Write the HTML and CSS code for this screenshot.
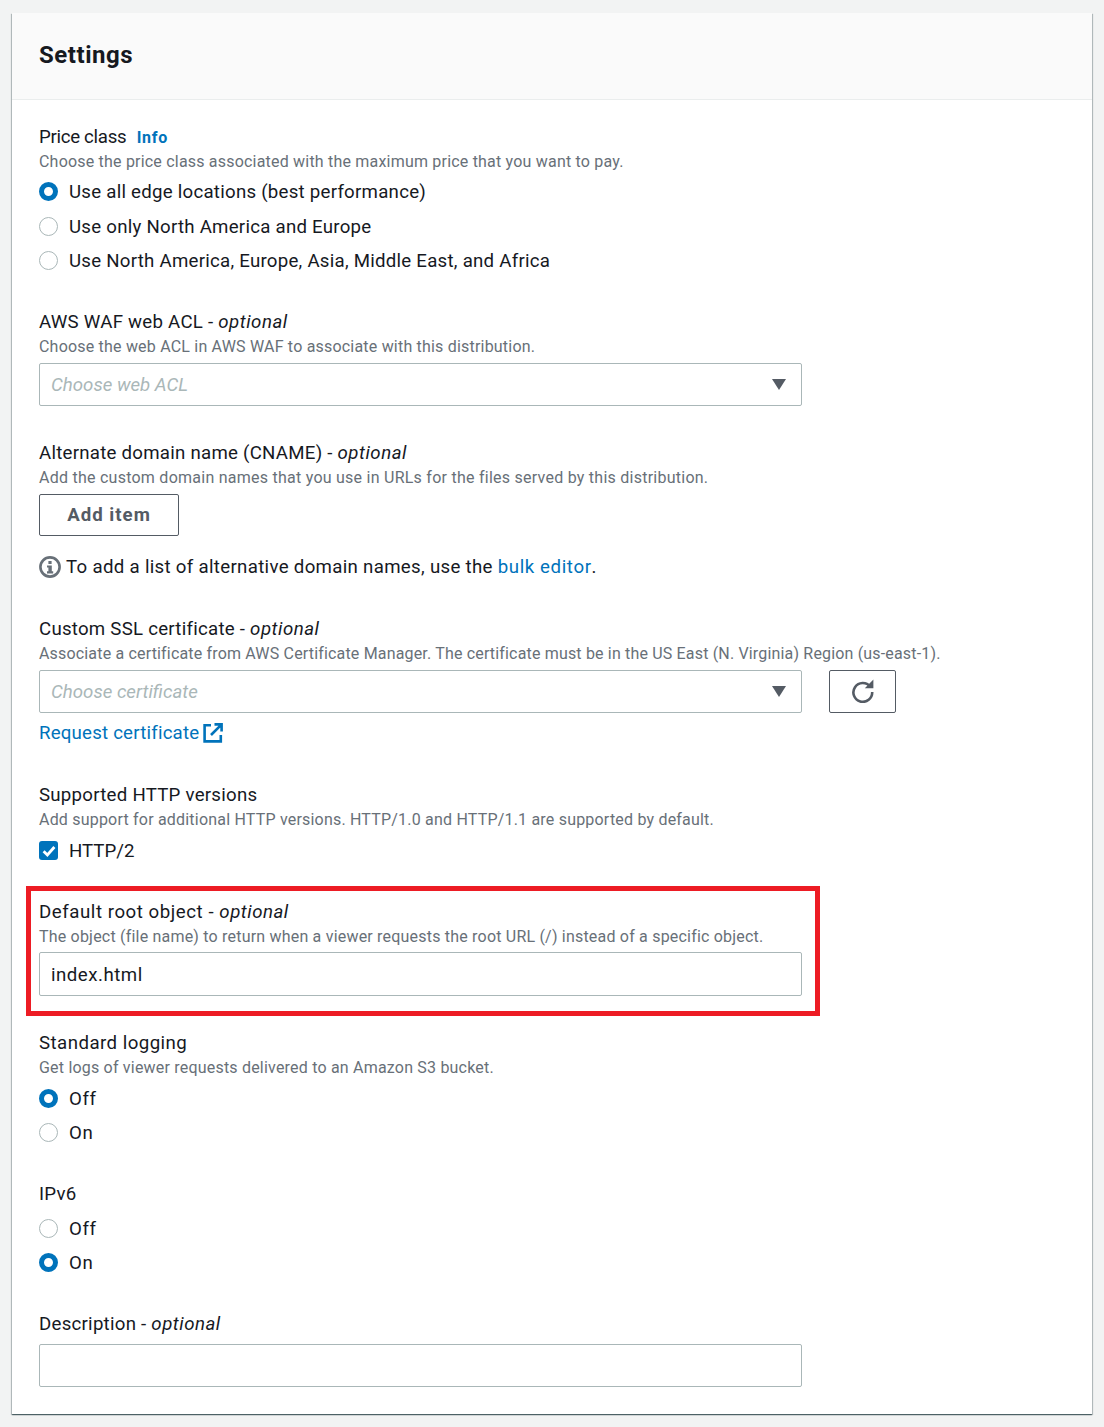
FILE: index.html
```html
<!DOCTYPE html>
<html lang="en">
<head>
<meta charset="utf-8">
<title>Settings</title>
<link rel="stylesheet" href="styles.css">
</head>
<body>
<section class="card">
  <header class="card-header"><h2>Settings</h2></header>
  <div class="card-body">
    <div class="field">
      <div class="label tight">Price class <a class="info">Info</a></div>
      <div class="desc">Choose the price class associated with the maximum price that you want to pay.</div>
      <div class="choice"><span class="radio on"></span>Use all edge locations (best performance)</div>
      <div class="choice"><span class="radio"></span>Use only North America and Europe</div>
      <div class="choice"><span class="radio"></span>Use North America, Europe, Asia, Middle East, and Africa</div>
    </div>
    <div class="field">
      <div class="label">AWS WAF web ACL - <em>optional</em></div>
      <div class="desc">Choose the web ACL in AWS WAF to associate with this distribution.</div>
      <div class="select gap4"><span>Choose web ACL</span><i class="caret"></i></div>
    </div>
    <div class="field">
      <div class="label">Alternate domain name (CNAME) - <em>optional</em></div>
      <div class="desc loose">Add the custom domain names that you use in URLs for the files served by this distribution.</div>
      <div class="button gap4">Add item</div>
      <div class="note">
        <svg class="info-icon" viewBox="0 0 22 22"><circle cx="11" cy="11" r="9.6" fill="none" stroke="#687078" stroke-width="2.6"/><rect x="9.4" y="5" width="3.2" height="3" fill="#687078"/><path d="M8 9.4h4.8v5.8h1.4v2.2H8v-2.2h1.4v-3.6H8z" fill="#687078"/></svg>
        <span>To add a list of alternative domain names, use the <a>bulk editor</a>.</span>
      </div>
    </div>
    <div class="field">
      <div class="label">Custom SSL certificate - <em>optional</em></div>
      <div class="desc close">Associate a certificate from AWS Certificate Manager. The certificate must be in the US East (N. Virginia) Region (us-east-1).</div>
      <div class="select-row gap4">
        <div class="select"><span>Choose certificate</span><i class="caret"></i></div>
        <div class="refresh">
          <svg viewBox="0 0 24 24" width="24" height="24"><path d="M19.2 7.6A9.4 9.4 0 1 0 21.2 13" fill="none" stroke="#545b64" stroke-width="2.6"/><path d="M22.4 .6v8.6h-8.6z" fill="#545b64"/></svg>
        </div>
      </div>
      <div class="link-row"><a>Request certificate</a>
        <svg class="ext" viewBox="0 0 20 20"><path d="M8 2.2H1.6v16.2h16.2V12" fill="none" stroke="#0073bb" stroke-width="2.6"/><path d="M11.5 1.4h7.1v7.1M18.4 1.6 8 12" fill="none" stroke="#0073bb" stroke-width="2.6"/></svg>
      </div>
    </div>
    <div class="field">
      <div class="label">Supported HTTP versions</div>
      <div class="desc">Add support for additional HTTP versions. HTTP/1.0 and HTTP/1.1 are supported by default.</div>
      <div class="choice after-desc plain"><span class="check"><svg viewBox="0 0 18 18" width="18" height="18"><path d="M3.6 9.2 7.4 13l7-8" fill="none" stroke="#fff" stroke-width="2.8"/></svg></span>HTTP/2</div>
    </div>
    <div class="field highlighted">
      <div class="label wide">Default root object - <em>optional</em></div>
      <div class="desc">The object (file name) to return when a viewer requests the root URL (/) instead of a specific object.</div>
      <div class="input gap3">index.html</div>
      <div class="callout"></div>
    </div>
    <div class="field">
      <div class="label roomy">Standard logging</div>
      <div class="desc">Get logs of viewer requests delivered to an Amazon S3 bucket.</div>
      <div class="choice nudge short"><span class="radio on"></span>Off</div>
      <div class="choice short"><span class="radio"></span>On</div>
    </div>
    <div class="field">
      <div class="label">IPv6</div>
      <div class="choice first short"><span class="radio"></span>Off</div>
      <div class="choice short"><span class="radio on"></span>On</div>
    </div>
    <div class="field">
      <div class="label">Description - <em>optional</em></div>
      <div class="input gap7 empty"></div>
    </div>
  </div>
</section>
</body>
</html>
```
FILE: styles.css
```css
* { box-sizing: border-box; }
html, body { margin: 0; padding: 0; }
body {
  background: #f2f3f3;
  padding: 13px 12px 13px;
  font-family: Roboto, "Liberation Sans", sans-serif;
  font-size: 18.67px;
  letter-spacing: 0.25px;
  color: #16191f;
  height: 1427px;
  overflow: hidden;
}
a { color: #0073bb; }
em { letter-spacing: 0.5px; }
.card {
  background: #fff;
  height: 1401px;
  box-shadow: 0 1px 1px 0 rgba(0, 28, 36, 0.5), 1px 1px 1px 0 rgba(0, 28, 36, 0.2), -1px 1px 1px 0 rgba(0, 28, 36, 0.2);
}
.card-header {
  height: 87px;
  background: #fafafa;
  border-bottom: 1px solid #eaeded;
  padding: 0 27px 2px;
  display: flex;
  align-items: center;
}
.card-header h2 { margin: 0; font-size: 24px; font-weight: 700; line-height: 32px; letter-spacing: 0.55px; }
.card-body {
  padding: 24px 27px 0;
  display: flex;
  flex-direction: column;
  gap: 31px;
}
.field { position: relative; width: 1000px; }
.label { height: 26px; line-height: 26px; white-space: nowrap; }
.label.tight { letter-spacing: -0.3px; }
.label.wide { letter-spacing: 0.55px; }
.label.roomy { letter-spacing: 0.45px; }
.info { font-size: 16px; font-weight: 700; margin-left: 6px; letter-spacing: 0.75px; }
.desc { height: 24px; line-height: 24px; font-size: 16px; letter-spacing: 0.2px; color: #687078; white-space: nowrap; }
.desc.loose { letter-spacing: 0.25px; }
.desc.close { letter-spacing: 0.17px; }
.choice { height: 34.5px; padding-top: 1.5px; display: flex; align-items: center; white-space: nowrap; }
.choice.first { margin-top: 4px; }
.choice.after-desc { margin-top: 1.5px; }
.choice.nudge { margin-top: 1px; }
.choice.plain { letter-spacing: 0; }
.choice.short { letter-spacing: 0.6px; }
.radio {
  width: 19px; height: 19px; margin-top: -1px; border-radius: 50%;
  border: 1.6px solid #aab7b8; margin-right: 11px; flex: none; background: #fff;
}
.radio.on { border: 5.5px solid #0073bb; }
.check {
  width: 19px; height: 19px; margin-top: -1px; border-radius: 3px; background: #0073bb; margin-right: 11px; flex: none;
  display: flex; align-items: center; justify-content: center;
}
.select, .input {
  width: 763px; border: 1px solid #aab7b8; border-radius: 2px;
  display: flex; align-items: center; padding: 2px 11px 0; background: #fff;
}
.select { height: 43px; justify-content: space-between; margin-bottom: 2px; font-style: italic; color: #aab7b8; letter-spacing: 0; }
.input { height: 44px; margin-bottom: 2px; letter-spacing: 0.5px; }
.input.empty { height: 43px; }
.gap3 { margin-top: 3px; }
.gap4 { margin-top: 4px; }
.gap7 { margin-top: 7px; }
.field > .select.gap4 { margin-bottom: 3px; }
.field > .input.gap3 { margin-bottom: 3px; }
.caret {
  width: 0; height: 0; margin-right: 4px; margin-top: -2px;
  border-left: 7px solid transparent; border-right: 7px solid transparent; border-top: 11px solid #545b64;
}
.button {
  width: 140px; height: 42px; border: 1px solid #545b64; border-radius: 2px;
  display: flex; align-items: center; justify-content: center;
  font-weight: 700; color: #545b64; letter-spacing: 1px;
}
.note { margin-top: 19px; height: 24px; display: flex; align-items: center; gap: 5px; margin-bottom: 6px; letter-spacing: 0.31px; }
.note a { letter-spacing: 0.6px; }
.info-icon { width: 22px; height: 22px; flex: none; }
.select-row { display: flex; gap: 27px; align-items: flex-start; }
.select-row .select { margin-bottom: 0; }
.refresh {
  width: 67px; height: 43px; border: 1px solid #545b64; border-radius: 2px;
  display: flex; align-items: center; justify-content: center;
}
.link-row { margin-top: 8px; height: 24px; line-height: 24px; display: flex; align-items: center; gap: 4px; margin-bottom: 6px; letter-spacing: 0.2px; }
.ext { width: 20px; height: 20px; flex: none; }
.callout {
  position: absolute; left: -13px; top: -13px; width: 794px; height: 130px;
  border: 5px solid #ed1c24; pointer-events: none;
}
```
